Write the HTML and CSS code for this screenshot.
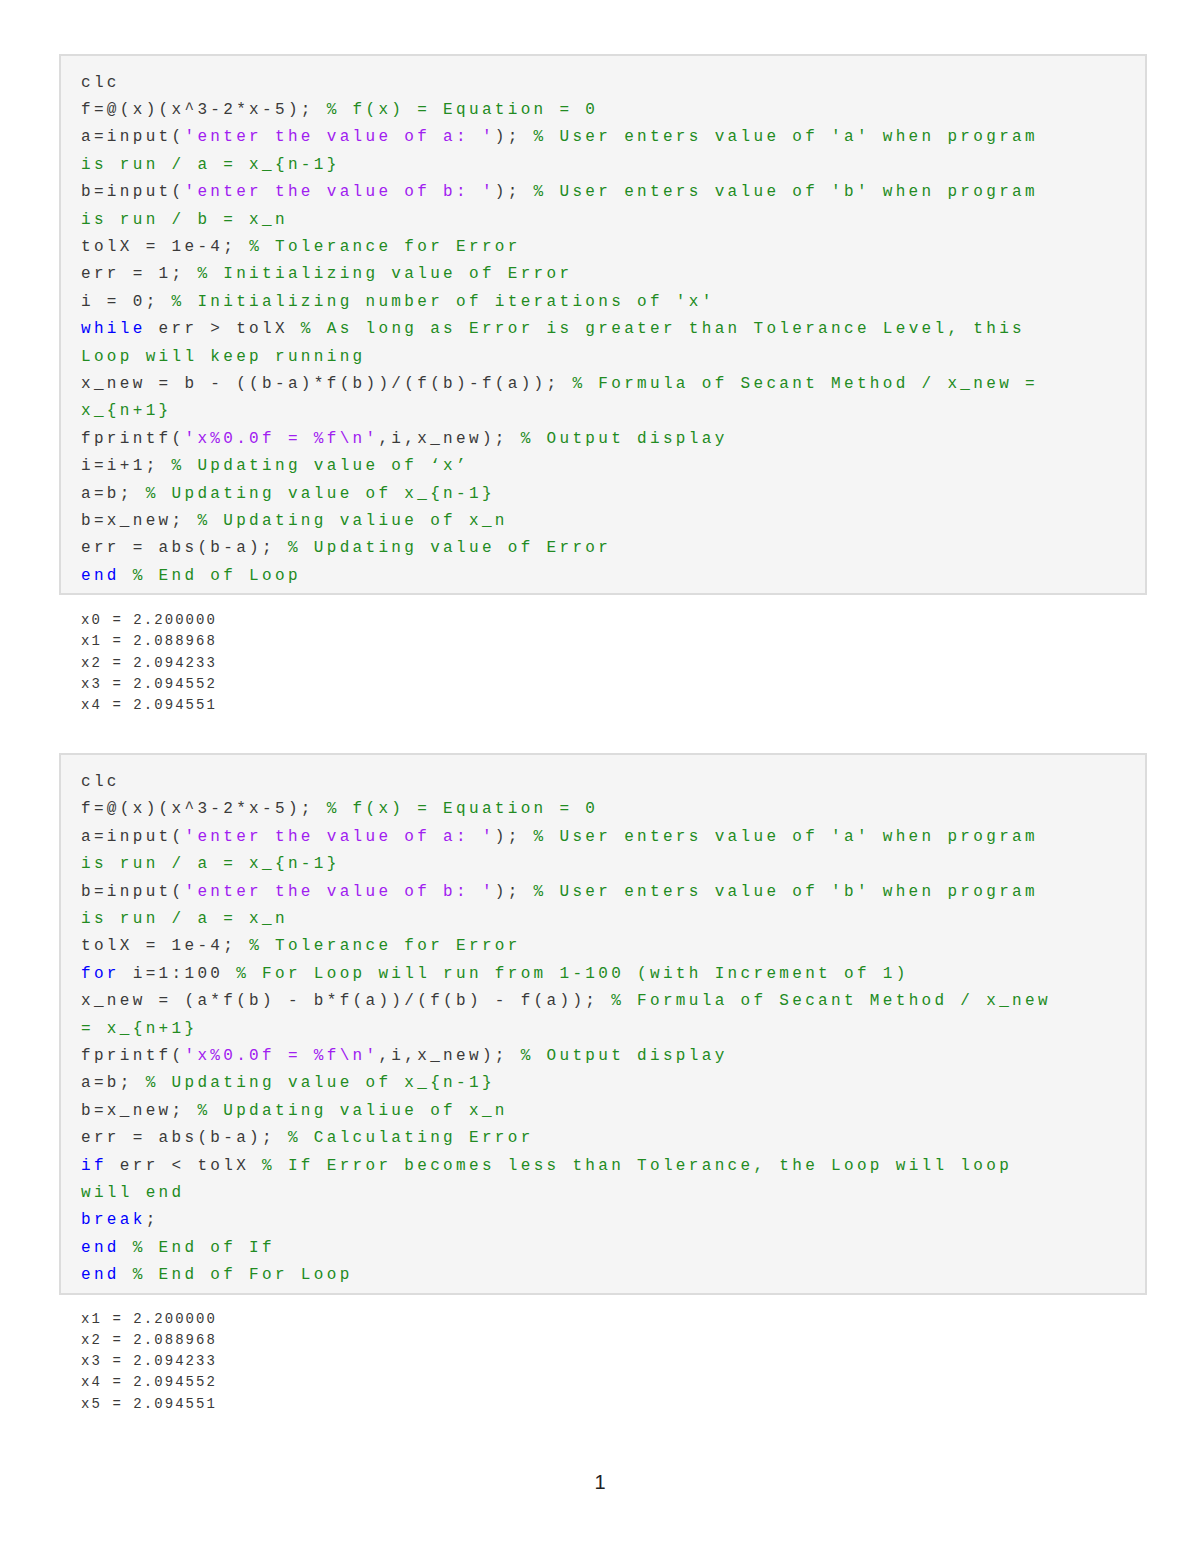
FILE: index.html
```html
<!DOCTYPE html>
<html>
<head>
<meta charset="utf-8">
<link rel="stylesheet" href="styles.css">
</head>
<body>
<div class="page">
  <div class="code">
<div class="ln">clc</div>
<div class="ln">f=@(x)(x^3-2*x-5); <span class="com">% f(x) = Equation = 0</span></div>
<div class="ln">a=input(<span class="str">'enter the value of a: '</span>); <span class="com">% User enters value of 'a' when program</span></div>
<div class="ln com">is run / a = x_{n-1}</div>
<div class="ln">b=input(<span class="str">'enter the value of b: '</span>); <span class="com">% User enters value of 'b' when program</span></div>
<div class="ln com">is run / b = x_n</div>
<div class="ln">tolX = 1e-4; <span class="com">% Tolerance for Error</span></div>
<div class="ln">err = 1; <span class="com">% Initializing value of Error</span></div>
<div class="ln">i = 0; <span class="com">% Initializing number of iterations of 'x'</span></div>
<div class="ln"><span class="kw">while</span> err &gt; tolX <span class="com">% As long as Error is greater than Tolerance Level, this</span></div>
<div class="ln com">Loop will keep running</div>
<div class="ln">x_new = b - ((b-a)*f(b))/(f(b)-f(a)); <span class="com">% Formula of Secant Method / x_new =</span></div>
<div class="ln com">x_{n+1}</div>
<div class="ln">fprintf(<span class="str">'x%0.0f = %f\n'</span>,i,x_new); <span class="com">% Output display</span></div>
<div class="ln">i=i+1; <span class="com">% Updating value of ‘x’</span></div>
<div class="ln">a=b; <span class="com">% Updating value of x_{n-1}</span></div>
<div class="ln">b=x_new; <span class="com">% Updating valiue of x_n</span></div>
<div class="ln">err = abs(b-a); <span class="com">% Updating value of Error</span></div>
<div class="ln"><span class="kw">end</span> <span class="com">% End of Loop</span></div>
  </div>
  <div class="out out-first">
<div class="oln">x0 = 2.200000</div>
<div class="oln">x1 = 2.088968</div>
<div class="oln">x2 = 2.094233</div>
<div class="oln">x3 = 2.094552</div>
<div class="oln">x4 = 2.094551</div>
  </div>
  <div class="code">
<div class="ln">clc</div>
<div class="ln">f=@(x)(x^3-2*x-5); <span class="com">% f(x) = Equation = 0</span></div>
<div class="ln">a=input(<span class="str">'enter the value of a: '</span>); <span class="com">% User enters value of 'a' when program</span></div>
<div class="ln com">is run / a = x_{n-1}</div>
<div class="ln">b=input(<span class="str">'enter the value of b: '</span>); <span class="com">% User enters value of 'b' when program</span></div>
<div class="ln com">is run / a = x_n</div>
<div class="ln">tolX = 1e-4; <span class="com">% Tolerance for Error</span></div>
<div class="ln"><span class="kw">for</span> i=1:100 <span class="com">% For Loop will run from 1-100 (with Increment of 1)</span></div>
<div class="ln">x_new = (a*f(b) - b*f(a))/(f(b) - f(a)); <span class="com">% Formula of Secant Method / x_new</span></div>
<div class="ln com">= x_{n+1}</div>
<div class="ln">fprintf(<span class="str">'x%0.0f = %f\n'</span>,i,x_new); <span class="com">% Output display</span></div>
<div class="ln">a=b; <span class="com">% Updating value of x_{n-1}</span></div>
<div class="ln">b=x_new; <span class="com">% Updating valiue of x_n</span></div>
<div class="ln">err = abs(b-a); <span class="com">% Calculating Error</span></div>
<div class="ln"><span class="kw">if</span> err &lt; tolX <span class="com">% If Error becomes less than Tolerance, the Loop will loop</span></div>
<div class="ln com">will end</div>
<div class="ln"><span class="kw">break</span>;</div>
<div class="ln"><span class="kw">end</span> <span class="com">% End of If</span></div>
<div class="ln"><span class="kw">end</span> <span class="com">% End of For Loop</span></div>
  </div>
  <div class="out out-second">
<div class="oln">x1 = 2.200000</div>
<div class="oln">x2 = 2.088968</div>
<div class="oln">x3 = 2.094233</div>
<div class="oln">x4 = 2.094552</div>
<div class="oln">x5 = 2.094551</div>
  </div>
  <div class="pagenum">1</div>
</div>
</body>
</html>
```

FILE: styles.css
```css
html, body {
  margin: 0;
  padding: 0;
  background: #ffffff;
}

.page {
  width: 1200px;
  height: 1553px;
  box-sizing: border-box;
  padding: 54px 53px 0 59px;
  display: flex;
  flex-direction: column;
}

.code {
  background: #f5f5f5;
  border: 2px solid #dcdcdc;
  padding: 13.5px 18px 3px 20px;
  font-family: "Liberation Mono", monospace;
  font-size: 16px;
  letter-spacing: 3.33px;
  line-height: 27.4px;
  color: #3a3a3a;
}

.ln {
  white-space: pre;
}

.com {
  color: #228b22;
}

.str {
  color: #a020f0;
}

.kw {
  color: #0000ff;
}

.out {
  padding-left: 22px;
  font-family: "Liberation Mono", monospace;
  font-size: 14px;
  letter-spacing: 2.06px;
  line-height: 21.25px;
  color: #3a3a3a;
}

.out-first {
  margin-top: 15px;
  margin-bottom: 37px;
}

.out-second {
  margin-top: 14px;
}

.oln {
  white-space: pre;
}

.pagenum {
  margin-top: 56px;
  text-align: center;
  margin-left: -59px;
  margin-right: -53px;
  font-family: "Liberation Sans", Arial, sans-serif;
  font-size: 20px;
  color: #222222;
}
```
